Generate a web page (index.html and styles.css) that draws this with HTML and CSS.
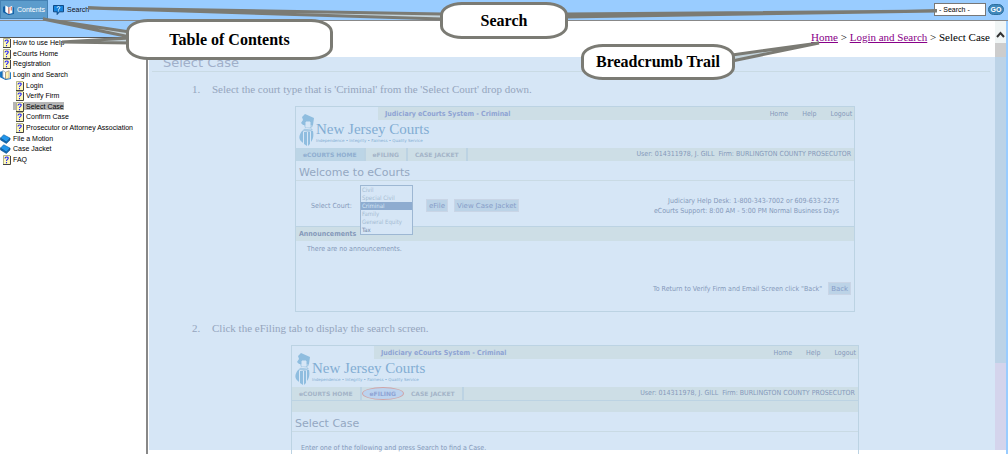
FILE: index.html
```html
<!DOCTYPE html>
<html lang="en">
<head>
  <meta charset="UTF-8">
  <meta name="viewport" content="width=device-width, initial-scale=1.0">
  <title>eCourts Help</title>
  <link rel="stylesheet" href="styles.css">
</head>
<body>
  <!-- shared drawings -->
  <svg class="defs" aria-hidden="true">
    <symbol id="page" viewBox="0 0 8 10">
      <path d="M0 0h8v10H0z" fill="#fff9b8"/>
      <path d="M.5 10V.5H7" fill="none" stroke="#b5b58a"/>
      <path d="M7.500 1v8.500H0" fill="none" stroke="#444"/>
      <path d="M2 3.500C2 1.500 5.200 1.500 5.200 3.200 5.200 4.500 3.500 4.400 3.500 6M3.500 7v1.200" fill="none" stroke="#2222ff" stroke-width="1.100"/>
    </symbol>
    <symbol id="open-book" viewBox="0 0 12 11">
      <path d="M0 2 3 1v7l3 2 5-1V2l1 1v7l-6 1-6-3z" fill="#1272c0"/>
      <path d="M3 .5 6 2.500V10L3 7.500z" fill="#fff" stroke="#5a7890" stroke-width=".6"/>
      <path d="M6 2.500 10 .8v8L6 10z" fill="#fff3b0" stroke="#876" stroke-width=".6"/>
    </symbol>
    <symbol id="book" viewBox="0 0 12 11">
      <path d="M.5 4.500 4 .8l7 3.700L7 9z" fill="#2196ec" stroke="#0a5596" stroke-width=".6"/>
      <path d="M.5 4.500v2L7 10.500l4-4v-2L7 9z" fill="#0d6dbd" stroke="#0a4a80" stroke-width=".6"/>
    </symbol>
    <symbol id="state" viewBox="0 0 16 32">
      <path d="M3 3 6 0l9 4-1 7H4l-2-2 2-3z" fill="#8fbddf"/>
      <path d="M5 11h9v1l-2 2 2 2-4 2-5-1-2 2V17l3-3z" fill="#a7cae5"/>
      <path d="M7 8h4v5H7zM4 14l8 1" fill="#d6e6f6" stroke="#d6e6f6"/>
      <path d="M3 17c-3 4-4 8 0 11l1 1V17zM5 18h3v14l-3-2zM9 18h2v12l-2 2zM12 17h2c1 5 0 8-2 11z" fill="#8fbddf"/>
    </symbol>
  </svg>

  <header class="toolbar">
    <button class="tool active" type="button">
      <svg class="tool-icon" viewBox="0 0 12 11"><path d="M0 2 3 1v7l3 2 5-1V2l1 1v7l-6 1-6-3z" fill="#0f5da5"/><path d="M2.500.5 6 2.500V10L2.500 7.500z" fill="#fff"/><path d="M6.500 2.500 10 .8v8l-3.500 1.200z" fill="#fff"/><path d="M6.500 2.500v7.300M9 2v4" stroke="#d84a32" fill="none"/></svg>Contents
    </button>
    <button class="tool" type="button">
      <svg class="tool-icon" viewBox="0 0 12 11"><path d="M.5.5h11v7H7L4.500 10.500v-3h-4z" fill="#1683dc" stroke="#093f78"/><path d="M4.500 3c0-1.700 3-1.700 3 0 0 1.200-1.500 1-1.500 2.300M6 6v1" fill="none" stroke="#fff"/></svg>Search
    </button>
    <form class="search">
      <input type="text" value="- Search -" aria-label="Search">
      <button class="go" type="button">GO</button>
    </form>
  </header>

  <main class="layout">
    <aside class="sidebar">
      <div class="sidebar-head"></div>
      <ul class="tree">
        <li><a href="#"><svg class="icon"><use href="#page"/></svg>How to use Help</a></li>
        <li><a href="#"><svg class="icon"><use href="#page"/></svg>eCourts Home</a></li>
        <li><a href="#"><svg class="icon"><use href="#page"/></svg>Registration</a></li>
        <li><a href="#"><svg class="icon book"><use href="#open-book"/></svg>Login and Search</a></li>
        <li class="sub"><a href="#"><svg class="icon"><use href="#page"/></svg>Login</a></li>
        <li class="sub"><a href="#"><svg class="icon"><use href="#page"/></svg>Verify Firm</a></li>
        <li class="sub"><a href="#" class="current"><svg class="icon"><use href="#page"/></svg>Select Case</a></li>
        <li class="sub"><a href="#"><svg class="icon"><use href="#page"/></svg>Confirm Case</a></li>
        <li class="sub"><a href="#"><svg class="icon"><use href="#page"/></svg>Prosecutor or Attorney Association</a></li>
        <li><a href="#"><svg class="icon book"><use href="#book"/></svg>File a Motion</a></li>
        <li><a href="#"><svg class="icon book"><use href="#book"/></svg>Case Jacket</a></li>
        <li><a href="#"><svg class="icon"><use href="#page"/></svg>FAQ</a></li>
      </ul>
    </aside>

    <section class="content">
      <div class="veil"></div>
      <nav class="breadcrumb"><a href="#">Home</a> &gt; <a href="#">Login and Search</a> &gt; Select Case</nav>
      <article class="topic">
        <h1>Select Case</h1>
        <ol>
          <li>Select the court type that is 'Criminal' from the 'Select Court' drop down.
            <div class="panel">
              <div class="panel-head">
                <svg class="state"><use href="#state"/></svg>
                <div class="topbar"><b>Judiciary eCourts System - Criminal</b><a href="#">Home</a><a href="#">Help</a><a href="#">Logout</a></div>
                <div class="brand">New Jersey Courts<small>Independence • Integrity • Fairness • Quality Service</small></div>
              </div>
              <div class="tabs">
                <a href="#" class="on">eCOURTS HOME</a><a href="#">eFILING</a><a href="#">CASE JACKET</a>
                <span class="user">User: 014311978, J. GILL&nbsp; Firm: BURLINGTON COUNTY PROSECUTOR</span>
              </div>
              <h2>Welcome to eCourts</h2>
              <div class="court-row">
                <label for="court">Select Court:</label>
                <div class="court-list">
                  <select id="court" size="6">
                    <option>Civil</option>
                    <option>Special Civil</option>
                    <option class="picked">Criminal</option>
                    <option>Family</option>
                    <option>General Equity</option>
                    <option class="last">Tax</option>
                  </select>
                </div>
                <button type="button">eFile</button>
                <button type="button">View Case Jacket</button>
                <p class="support">Judiciary Help Desk: 1-800-343-7002 or 609-633-2275<br>eCourts Support: 8:00 AM - 5:00 PM Normal Business Days</p>
              </div>
              <h3>Announcements</h3>
              <p class="note">There are no announcements.</p>
              <div class="back-row">To Return to Verify Firm and Email Screen click "Back" <button type="button">Back</button></div>
            </div>
          </li>
          <li>Click the eFiling tab to display the search screen.
            <div class="panel panel-search">
              <div class="panel-head">
                <svg class="state"><use href="#state"/></svg>
                <div class="topbar"><b>Judiciary eCourts System - Criminal</b><a href="#">Home</a><a href="#">Help</a><a href="#">Logout</a></div>
                <div class="brand">New Jersey Courts<small>Independence • Integrity • Fairness • Quality Service</small></div>
              </div>
              <div class="tabs">
                <a href="#">eCOURTS HOME</a><a href="#" class="circled">eFILING</a><a href="#">CASE JACKET</a>
                <span class="user">User: 014311978, J. GILL&nbsp; Firm: BURLINGTON COUNTY PROSECUTOR</span>
              </div>
              <div class="subbar"></div>
              <h2>Select Case</h2>
              <p class="note">Enter one of the following and press Search to find a Case.</p>
            </div>
          </li>
        </ol>
      </article>
    </section>

    <div class="scrollbar">
      <svg class="arrow" viewBox="0 0 11 22"><path d="m2 16 3.500-4L9 16" fill="none" stroke="#333" stroke-width="2"/></svg>
      <div class="thumb"></div>
      <div class="track"></div>
    </div>
  </main>

  <!-- callouts over the page -->
  <svg class="tails" viewBox="0 0 1008 90" aria-hidden="true">
    <path d="M43 19 130 32v5zM62 42l68-4v5z"/>
    <path d="m88 8 354 6v5z"/>
    <path d="m566 14 371-3-371 6z"/>
    <path d="m819 43-87 12v6z"/>
  </svg>
  <div class="callout contents-note">Table of Contents</div>
  <div class="callout search-note">Search</div>
  <div class="callout trail-note">Breadcrumb Trail</div>
</body>
</html>
```
FILE: styles.css
```css
* {
  box-sizing: border-box;
}
body {
  margin: 0;
  height: 100vh;
  display: flex;
  flex-direction: column;
  overflow: hidden;
  position: relative;
  background-color: #fff;
  font-family: "Liberation Serif", serif;
  font-size: 11px;
}
a {
  color: inherit;
  text-decoration: none;
}
ul, ol, p, h1, h2, h3 {
  margin: 0;
  padding: 0;
  list-style: none;
}
.defs {
  display: none;
}

/* toolbar */
.toolbar {
  flex: none;
  height: 21px;
  display: flex;
  align-items: flex-start;
  gap: 2px;
  background-color: #99ccff;
  border-bottom: 1px solid #888;
}
.tool {
  display: flex;
  align-items: center;
  gap: 3px;
  height: 19px;
  padding: 0 2px;
  border: 1px solid transparent;
  background: none;
  font-family: "Liberation Sans", sans-serif;
  font-size: 7px;
  color: #112;
}
.tool.active {
  background-color: #5c9ccc;
  border-color: #4582b4;
  color: #fff;
}
.tool-icon {
  width: 11px;
  height: 10px;
}
.search {
  margin: 3px 4px 0 auto;
  display: flex;
  gap: 2px;
}
.search input {
  width: 52px;
  height: 13px;
  padding: 0 4px;
  border: 1px solid #777;
  font-family: "Liberation Sans", sans-serif;
  font-size: 7px;
}
.go {
  width: 16px;
  height: 11px;
  margin-top: 1px;
  padding: 0;
  border: 1px solid #2d6f9f;
  border-radius: 6px;
  background-color: #4088bb;
  color: #fff;
  font: bold 7px "Liberation Sans", sans-serif;
}

.layout {
  flex: 1;
  min-height: 0;
  display: flex;
  border-right: 2px solid #99ccff;
}

/* table of contents */
.sidebar {
  flex: none;
  width: 148px;
  border-right: 2px solid #888;
  font-family: "Liberation Sans", sans-serif;
  font-size: 7px;
}
.sidebar-head {
  height: 17px;
  background-color: #99ccff;
  border-bottom: 1px solid #555;
}
.tree {
  display: grid;
  grid-auto-rows: 1fr;
  height: 127px;
}
.tree li {
  min-height: 0;
}
.tree a {
  display: flex;
  align-items: center;
  gap: 2px;
  width: max-content;
  height: 100%;
  line-height: 8px;
  padding-left: 3px;
  white-space: nowrap;
}
.tree .sub {
  padding-left: 13px;
}
.tree .current {
  background: linear-gradient(#b5b5b5, #b5b5b5) 0 1px / 100% 8px no-repeat;
}
.icon {
  width: 8px;
  height: 10px;
}
.icon.book {
  width: 11px;
  margin-left: -3px;
}

/* topic */
.content {
  flex: 1;
  min-width: 0;
  position: relative;
  overflow: hidden;
  padding: 0 5px 0 4px;
}
.veil {
  position: absolute;
  inset: 36px 0 4px 1px;
  background-color: #d6e6f6;
}
.breadcrumb {
  position: relative;
  padding-top: 10px;
  line-height: 13px;
  text-align: right;
}
.breadcrumb a {
  color: #808;
  text-decoration: underline;
}
.topic {
  position: relative;
  color: #95a5bd;
}
.topic h1 {
  margin-top: 9px;
  padding-left: 11px;
  height: 19px;
  border-bottom: 1px solid #c9dae4;
  font: 13px/20px "DejaVu Sans", sans-serif;
  color: #a0afc9;
}
.topic ol {
  padding: 9px 0 0 60px;
  counter-reset: step;
}
.topic ol > li {
  position: relative;
  line-height: 16px;
  margin-bottom: 8px;
  counter-increment: step;
}
.topic ol > li::before {
  content: counter(step) ".";
  position: absolute;
  left: -20px;
}

/* eCourts panels */
.panel {
  width: 72%;
  margin: 9px 0 0 83px;
  height: 206px;
  border: 1px solid #bcd3e3;
  font: 7px/8px "DejaVu Sans Condensed", "DejaVu Sans", sans-serif;
  color: #8599ba;
}
.panel-search {
  width: 73%;
  margin-left: 79px;
}
.panel-head {
  display: grid;
  grid-template: 13px 28px / 20px 62px 1fr;
}
.state {
  grid-area: 1 / 1 / 3 / 2;
  width: 16px;
  height: 32px;
  margin: 7px 0 0 3px;
}
.topbar {
  grid-area: 1 / 3;
  display: flex;
  align-items: center;
  gap: 14px;
  padding: 0 2px 0 7px;
  background-color: #cddee6;
}
.topbar b {
  margin-right: auto;
  color: #8fa4d4;
}
.brand {
  grid-area: 2 / 2 / 3 / 4;
  font: 15px/19px "Liberation Serif", serif;
  color: #82add3;
}
.brand small {
  display: block;
  font: 4px/4px "DejaVu Sans", sans-serif;
}
.tabs {
  display: flex;
  align-items: center;
  height: 13px;
  background-color: #cddee6;
  line-height: 13px;
}
.tabs a {
  padding: 0 7px;
  border-right: 2px solid #bcd3e3;
  font: bold 6px/13px "DejaVu Sans", sans-serif;
  color: #a4b4c8;
}
.tabs .on {
  background-color: #bcd5e6;
  color: #8faed0;
}
.tabs .circled {
  border: 1px solid #d0a5a8;
  border-radius: 50%;
  background-color: #bcd3ef;
  color: #8fa4d4;
  line-height: 11px;
}
.user {
  margin-left: auto;
  padding-right: 3px;
}
.panel h2 {
  height: 20px;
  padding-left: 3px;
  border-bottom: 1px solid #c9dae4;
  font: 11px/24px "DejaVu Sans", sans-serif;
  color: #94a8c2;
}
.court-row {
  display: flex;
  align-items: center;
  height: 45px;
  padding: 4px 15px 0 15px;
}
.court-row label {
  width: 49px;
}
.court-list {
  position: relative;
  width: 66px;
  height: 41px;
}
.court-list select {
  position: absolute;
  top: 0;
  left: 0;
  width: 53px;
  height: 50px;
  padding: 0;
  border: 1px solid #9db7d3;
  border-radius: 0;
  background-color: #d6e6f6;
  overflow: hidden;
  font: 6px/8px "DejaVu Sans Condensed", sans-serif;
}
.court-list option {
  min-height: 8px;
  height: 8px;
  padding: 0 1px;
  color: #a5bcd2;
}
.court-list .picked {
  background-color: #8eacd0;
  color: #d6e6f6;
}
.court-list .last {
  color: #7084a4;
}
.panel button {
  height: 13px;
  margin-right: 6px;
  padding: 0 2px;
  border: 1px solid #c9d5e6;
  background-color: #bcd3e7;
  font: 7px/8px "DejaVu Sans", sans-serif;
  color: #869dc8;
}
.support {
  margin-left: auto;
  text-align: right;
  line-height: 10px;
}
.panel h3 {
  height: 15px;
  padding-left: 3px;
  border-top: 1px solid #bcd3e3;
  background-color: #cddee6;
  font: bold 7px/14px "DejaVu Sans Condensed", sans-serif;
}
.note {
  padding: 4px 11px;
}
.back-row {
  display: flex;
  align-items: center;
  justify-content: flex-end;
  gap: 6px;
  margin-top: 25px;
}
.back-row button {
  margin-right: 3px;
}
.subbar {
  height: 12px;
  border-top: 1px solid #bcd3e3;
  background-color: #cddee6;
}
.panel-search .note {
  padding: 12px 9px;
}

/* scroll bar */
.scrollbar {
  flex: none;
  width: 11px;
  display: flex;
  flex-direction: column;
  padding-bottom: 4px;
}
.arrow {
  height: 22px;
  background-color: #f0f5f5;
}
.thumb {
  flex: 320;
  background: linear-gradient(#cdcdcd 14px, #bcd3e7 14px);
}
.track {
  flex: 87;
  background-color: #d4d4ec;
}

/* callouts */
.tails {
  position: absolute;
  top: 0;
  left: 0;
  width: 1008px;
  height: 90px;
  fill: #c4d4dc;
  stroke: #7b7b74;
  stroke-width: 3;
  stroke-linejoin: bevel;
}
.callout {
  position: absolute;
  display: flex;
  align-items: center;
  justify-content: center;
  border: 3px solid #7b7b74;
  border-radius: 22px / 13px;
  background-color: #fff;
  font-size: 16px;
  font-weight: bold;
}
.contents-note {
  top: 19px;
  left: 126px;
  width: 207px;
  height: 41px;
}
.search-note {
  top: 2px;
  left: 440px;
  width: 128px;
  height: 37px;
}
.trail-note {
  top: 44px;
  left: 581px;
  width: 154px;
  height: 36px;
}
```
